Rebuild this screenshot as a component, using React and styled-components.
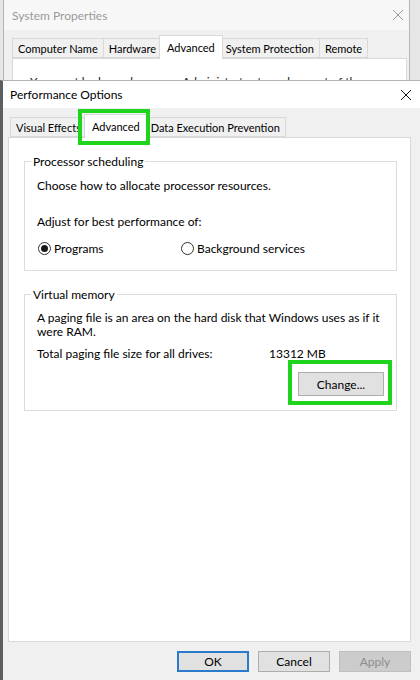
import styled, { createGlobalStyle } from "styled-components";

const GlobalStyle = createGlobalStyle`
  html, body {
    margin: 0;
    padding: 0;
    background: #e6e6e6;
  }
  body {
    font-family: "Lato", "Noto Sans", sans-serif;
    font-size: 12px;
    color: #000;
  }
`;

const Desktop = styled.div`
  position: relative;
  width: 420px;
  height: 680px;
  overflow: hidden;
  background: #e6e6e6;
`;

const SysWindow = styled.div`
  position: absolute;
  left: 3px;
  top: 0;
  width: 405px;
  height: 84px;
  overflow: hidden;
  background: #f0f0f0;
  border-left: 1px solid #b4b4b4;
  border-right: 1px solid #b4b4b4;
`;

const TitleBar = styled.div`
  display: flex;
  align-items: center;
  justify-content: space-between;
  height: ${(p) => p.$h}px;
  padding: 0 ${(p) => p.$pr}px 0 ${(p) => p.$pl}px;
  background: ${(p) => (p.$active ? "#ffffff" : "#f7f7f7")};
  color: ${(p) => (p.$active ? "#000" : "#9a9a9a")};
  font-size: 12px;
`;

const CloseIcon = ({ color }) => (
  <svg width="12" height="12" viewBox="0 0 12 12">
    <path d="M1 1 L11 11 M11 1 L1 11" stroke={color} strokeWidth="1" fill="none" />
  </svg>
);

const TabRow = styled.div`
  position: relative;
  display: flex;
  align-items: flex-end;
  height: ${(p) => p.$h}px;
  padding-left: ${(p) => p.$pl}px;
  z-index: 1;
`;

const TabWrap = styled.div`
  position: relative;
  margin: ${(p) => (p.$active ? "0 -2px -1px" : "0")};
  z-index: ${(p) => (p.$active ? 2 : 1)};
`;

const Tab = styled.div`
  height: ${(p) => (p.$active ? 24 : 20)}px;
  box-sizing: border-box;
  padding: ${(p) => (p.$active ? "5px 7px 0" : "3px 5px 0")};
  background: ${(p) => (p.$active ? "#ffffff" : "#f0f0f0")};
  border: 1px solid #d9d9d9;
  border-bottom: ${(p) => (p.$active ? "none" : "1px solid #d9d9d9")};
  margin-left: -1px;
  white-space: nowrap;
  font-size: 11px;
  line-height: 14px;
`;

const Highlight = styled.div`
  position: absolute;
  left: -7px;
  right: -2px;
  top: -5px;
  bottom: -7px;
  border: 4px solid #1fd41f;
  pointer-events: none;
`;

const SysPanel = styled.div`
  margin: 0 2px 0 8px;
  height: 80px;
  background: #fff;
  border: 1px solid #d9d9d9;
  padding: 15px 0 0 17px;
  color: #222;
  font-size: 12px;
`;

const PerfWindow = styled.div`
  position: absolute;
  left: 0;
  top: 80px;
  width: 430px;
  height: 600px;
  background: #f0f0f0;
  border-left: 3px solid #5e5e5e;
  border-top: 1px solid #b4b4b4;
  box-sizing: border-box;
  z-index: 5;
`;

const Body = styled.div`
  padding: 0 0 0 5px;
`;

const Panel = styled.div`
  width: 403px;
  height: 505px;
  box-sizing: border-box;
  background: #fff;
  border: 1px solid #d9d9d9;
  padding: 16px 13px 0 15px;
  display: flex;
  flex-direction: column;
  gap: 16px;
`;

const Group = styled.fieldset`
  margin: 0;
  border: 1px solid #dcdcdc;
  padding: 0 12px ${(p) => p.$pb}px 12px;
  min-width: 0;
`;

const Legend = styled.legend`
  margin-left: -6px;
  padding: 0 2px;
  font-size: 12px;
  line-height: 15px;
`;

const Line = styled.div`
  font-size: 12px;
  line-height: ${(p) => p.$lh || 15}px;
  margin-top: ${(p) => p.$mt || 0}px;
`;

const RadioRow = styled.div`
  display: flex;
  margin-top: 12px;
`;

const RadioLabel = styled.label`
  display: flex;
  align-items: center;
  gap: 3px;
  width: ${(p) => p.$w}px;
  line-height: 15px;
  padding-left: 1px;
`;

const RadioCircle = styled.span`
  position: relative;
  width: 13px;
  height: 13px;
  box-sizing: border-box;
  border: 1px solid #333;
  border-radius: 50%;
  background: #fff;
  flex: none;

  &::after {
    content: "";
    display: ${(p) => (p.$checked ? "block" : "none")};
    position: absolute;
    left: 2px;
    top: 2px;
    width: 7px;
    height: 7px;
    border-radius: 50%;
    background: #1a1a1a;
  }
`;

const SizeRow = styled.div`
  display: grid;
  grid-template-columns: 232px 1fr;
  margin-top: 7px;
  line-height: 15px;
`;

const ButtonRow = styled.div`
  display: flex;
  justify-content: flex-end;
  margin-top: ${(p) => p.$mt}px;
  gap: 9px;
`;

const ButtonWrap = styled.div`
  position: relative;
`;

const Button = styled.button`
  width: ${(p) => p.$w}px;
  height: ${(p) => p.$h}px;
  box-sizing: border-box;
  font-family: inherit;
  font-size: 12px;
  padding: 0;
  background: ${(p) => (p.$disabled ? "#cccccc" : "#e1e1e1")};
  color: ${(p) => (p.$disabled ? "#8c8c8c" : "#000")};
  border: ${(p) => (p.$primary ? "2px solid #2a7bcc" : p.$disabled ? "1px solid #bfbfbf" : "1px solid #adadad")};
  border-radius: 0;
`;

const ButtonHighlight = styled.div`
  position: absolute;
  left: -10px;
  right: -8px;
  top: -12px;
  bottom: -9px;
  border: 4px solid #1fd41f;
  pointer-events: none;
`;

const Footer = styled.div`
  width: 403px;
`;

const sysTabs = ["Computer Name", "Hardware", "Advanced", "System Protection", "Remote"];
const perfTabs = ["Visual Effects", "Advanced", "Data Execution Prevention"];

export default function App() {
  return (
    <Desktop>
      <GlobalStyle />
      <SysWindow>
        <TitleBar $h={30} $pl={8} $pr={5}>
          <span>System Properties</span>
          <CloseIcon color="#9a9a9a" />
        </TitleBar>
        <TabRow $h={28} $pl={9}>
          {sysTabs.map((t) => (
            <TabWrap key={t} $active={t === "Advanced"}>
              <Tab $active={t === "Advanced"}>{t}</Tab>
            </TabWrap>
          ))}
        </TabRow>
        <SysPanel>You must be logged on as an Administrator to make most of these changes.</SysPanel>
      </SysWindow>

      <PerfWindow>
        <TitleBar $h={27} $pl={7} $pr={18} $active>
          <span>Performance Options</span>
          <CloseIcon color="#111" />
        </TitleBar>
        <Body>
          <TabRow $h={29} $pl={3}>
            {perfTabs.map((t) => (
              <TabWrap key={t} $active={t === "Advanced"}>
                <Tab $active={t === "Advanced"}>{t}</Tab>
                {t === "Advanced" && <Highlight />}
              </TabWrap>
            ))}
          </TabRow>
          <Panel>
            <Group $pb={14}>
              <Legend>Processor scheduling</Legend>
              <Line $mt={9}>Choose how to allocate processor resources.</Line>
              <Line $mt={21}>Adjust for best performance of:</Line>
              <RadioRow>
                <RadioLabel $w={142}>
                  <RadioCircle $checked />
                  Programs
                </RadioLabel>
                <RadioLabel $w={160}>
                  <RadioCircle />
                  Background services
                </RadioLabel>
              </RadioRow>
            </Group>
            <Group $pb={14}>
              <Legend>Virtual memory</Legend>
              <Line $mt={9} $lh={14}>
                A paging file is an area on the hard disk that Windows uses as if it
                <br />
                were RAM.
              </Line>
              <SizeRow>
                <span>Total paging file size for all drives:</span>
                <span>13312 MB</span>
              </SizeRow>
              <ButtonRow $mt={11}>
                <ButtonWrap>
                  <Button $w={86} $h={24}>Change...</Button>
                  <ButtonHighlight />
                </ButtonWrap>
              </ButtonRow>
            </Group>
          </Panel>
          <Footer>
            <ButtonRow $mt={9}>
              <Button $w={72} $h={21} $primary>OK</Button>
              <Button $w={72} $h={21}>Cancel</Button>
              <Button $w={72} $h={21} $disabled>Apply</Button>
            </ButtonRow>
          </Footer>
        </Body>
      </PerfWindow>
    </Desktop>
  );
}
